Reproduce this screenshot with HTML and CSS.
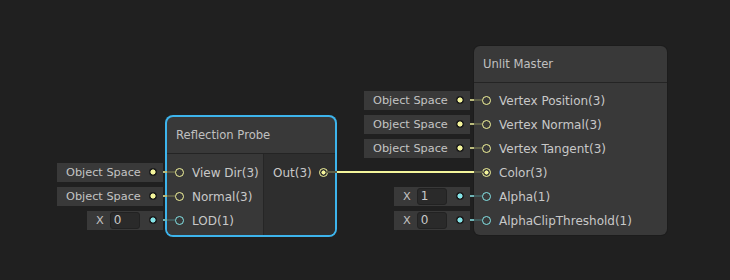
FILE: index.html
```html
<!DOCTYPE html>
<html lang="en">
<head>
  <meta charset="UTF-8">
  <meta name="viewport" content="width=device-width, initial-scale=1.0">
  <title>Shader Graph</title>
  <link rel="stylesheet" href="styles.css">
</head>
<body>
  <div class="graph">

    <!-- Reflection Probe node with its default inputs -->
    <div class="group group-probe">
      <div class="fields">
        <div class="field-row">
          <div class="field field-wide vec3">Object Space<span class="field-dot"></span></div>
        </div>
        <div class="field-row">
          <div class="field field-wide vec3">Object Space<span class="field-dot"></span></div>
        </div>
        <div class="field-row">
          <div class="field field-x vec1">X<span class="num-input">0</span><span class="field-dot"></span></div>
        </div>
      </div>

      <div class="node node-probe selected">
        <div class="node-header">Reflection Probe</div>
        <div class="node-body">
          <div class="inputs">
            <div class="port-row"><span class="port vec3"></span>View Dir(3)</div>
            <div class="port-row"><span class="port vec3"></span>Normal(3)</div>
            <div class="port-row"><span class="port vec1"></span>LOD(1)</div>
          </div>
          <div class="outputs">
            <div class="port-row out-row">Out(3)<span class="port vec3 connected"></span></div>
          </div>
        </div>
      </div>
    </div>

    <!-- Unlit Master node -->
    <div class="group group-master">
      <div class="fields">
        <div class="field-row">
          <div class="field field-wide vec3">Object Space<span class="field-dot"></span></div>
        </div>
        <div class="field-row">
          <div class="field field-wide vec3">Object Space<span class="field-dot"></span></div>
        </div>
        <div class="field-row">
          <div class="field field-wide vec3">Object Space<span class="field-dot"></span></div>
        </div>
        <div class="field-row"></div>
        <div class="field-row">
          <div class="field field-x vec1">X<span class="num-input">1</span><span class="field-dot"></span></div>
        </div>
        <div class="field-row">
          <div class="field field-x vec1">X<span class="num-input">0</span><span class="field-dot"></span></div>
        </div>
      </div>

      <div class="node node-master">
        <div class="node-header">Unlit Master</div>
        <div class="node-body master-body">
          <div class="port-row"><span class="port vec3"></span>Vertex Position(3)</div>
          <div class="port-row"><span class="port vec3"></span>Vertex Normal(3)</div>
          <div class="port-row"><span class="port vec3"></span>Vertex Tangent(3)</div>
          <div class="port-row"><span class="port vec3 connected"></span>Color(3)</div>
          <div class="port-row"><span class="port vec1"></span>Alpha(1)</div>
          <div class="port-row"><span class="port vec1"></span>AlphaClipThreshold(1)</div>
        </div>
      </div>
    </div>

    <!-- edge: Reflection Probe Out(3) -> Unlit Master Color(3) -->
    <div class="edge"></div>
  </div>
</body>
</html>
```

FILE: styles.css
```css
body {
  margin: 0;
  background-color: #202020;
  font-family: 'DejaVu Sans', Verdana, sans-serif;
  color: #c6c6c6;
}

.graph {
  position: relative;
  width: 730px;
  height: 280px;
  overflow: hidden;
}

/* node + its inline input fields */
.group {
  position: absolute;
  display: flex;
  align-items: flex-start;
  gap: 4px;
}

.group-probe {
  left: 57px;
  top: 117px;
}

.group-master {
  left: 364px;
  top: 46px;
}

.fields {
  width: 106px;
  display: flex;
  flex-direction: column;
  align-items: flex-end;
}

.group-probe .fields {
  padding-top: 43px;
}

.group-master .fields {
  padding-top: 42px;
}

.field-row {
  height: 24px;
  display: flex;
  align-items: center;
}

.field {
  position: relative;
  box-sizing: border-box;
  height: 19px;
  display: flex;
  align-items: center;
  padding: 0 6px 0 9px;
  background-color: #393939;
  font-size: 11.3px;
  color: #c4c4c4;
}

.field-wide {
  width: 106px;
}

.field-x {
  width: 76px;
}

.num-input {
  box-sizing: border-box;
  width: 30px;
  height: 17px;
  margin-left: 6px;
  padding-left: 3px;
  background-color: #2a2a2a;
  border: 1px solid #222;
  border-radius: 3px;
  font-size: 12px;
  line-height: 15px;
  color: #c8c8c8;
}

.field-dot {
  width: 8px;
  height: 8px;
  margin-left: auto;
  border-radius: 50%;
  background: radial-gradient(circle, var(--c) 0 2.3px, #1c1c1c 2.8px);
}

/* wire from field to port */
.field::after {
  content: "";
  position: absolute;
  left: 100%;
  top: 8.5px;
  width: 12px;
  height: 2px;
  z-index: 3;
  background: linear-gradient(to right, var(--bright) 0 4px, var(--dim) 4px);
}

.vec3 {
  --c: #f4f59b;
  --bright: #b9ba7c;
  --dim: #5e5f48;
}

.vec1 {
  --c: #84e4e7;
  --bright: #6fb3b5;
  --dim: #40595a;
}

/* nodes */
.node {
  border-radius: 6px;
  overflow: hidden;
  background-color: #393939;
  box-shadow: 0 0 0 1px #1c1c1c;
}

.node.selected {
  overflow: visible;
  box-shadow: 0 0 0 2px #3db4ec;
}

.node-probe {
  width: 168px;
}

.node-master {
  width: 193px;
}

.node-header {
  height: 36px;
  padding-left: 9px;
  display: flex;
  align-items: center;
  border-bottom: 1px solid #242424;
  font-size: 11.6px;
  color: #c0c0c0;
}

.node-body {
  display: flex;
}

.inputs {
  width: 96px;
  flex-shrink: 0;
  padding: 6px 0 3px;
  border-radius: 0 0 0 6px;
  background-color: #383838;
}

.outputs {
  flex: 1;
  min-width: 0;
  padding: 6px 7px 0 9px;
  border-left: 1px solid #262626;
  border-radius: 0 0 6px 0;
  background-color: #2e2e2e;
}

.master-body {
  flex-direction: column;
  padding: 5px 0 3px;
}

.port-row {
  height: 24px;
  display: flex;
  align-items: center;
  gap: 8px;
  padding-left: 8px;
  padding-top: 1px;
  box-sizing: border-box;
  font-size: 12px;
  color: #c8c8c8;
  white-space: nowrap;
}

.out-row {
  gap: 4px;
  padding-left: 0;
  justify-content: space-between;
}

.port {
  box-sizing: border-box;
  flex-shrink: 0;
  width: 9px;
  height: 9px;
  margin-top: -1px;
  border-radius: 50%;
  border: 1.5px solid var(--c);
}

.port.connected {
  background: radial-gradient(circle, var(--c) 0 1.8px, transparent 2.3px);
}

.edge {
  position: absolute;
  left: 326px;
  top: 171px;
  width: 157px;
  height: 2px;
  z-index: 2;
  background: linear-gradient(to right, #5e5f48 0 11px, #f4f59b 11px 148px, #5e5f48 148px);
}
```
